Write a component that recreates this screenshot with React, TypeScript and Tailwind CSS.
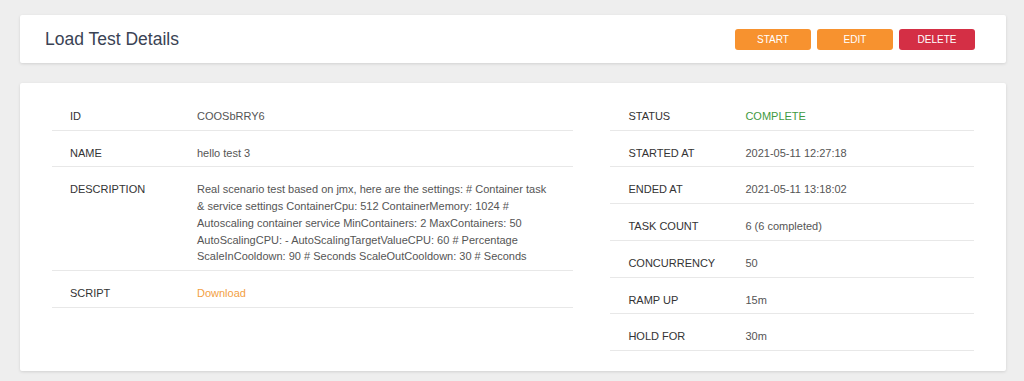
import React from 'react';

type Row = { label: string; value: React.ReactNode };

const leftRows: Row[] = [
  { label: 'ID', value: 'COOSbRRY6' },
  { label: 'NAME', value: 'hello test 3' },
  {
    label: 'DESCRIPTION',
    value:
      'Real scenario test based on jmx, here are the settings: # Container task & service settings ContainerCpu: 512 ContainerMemory: 1024 # Autoscaling container service MinContainers: 2 MaxContainers: 50 AutoScalingCPU: - AutoScalingTargetValueCPU: 60 # Percentage ScaleInCooldown: 90 # Seconds ScaleOutCooldown: 30 # Seconds',
  },
  {
    label: 'SCRIPT',
    value: (
      <a href="#" className="text-[#f3a043]">
        Download
      </a>
    ),
  },
];

const rightRows: Row[] = [
  { label: 'STATUS', value: <span className="text-[#3f9a3f]">COMPLETE</span> },
  { label: 'STARTED AT', value: '2021-05-11 12:27:18' },
  { label: 'ENDED AT', value: '2021-05-11 13:18:02' },
  { label: 'TASK COUNT', value: '6 (6 completed)' },
  { label: 'CONCURRENCY', value: '50' },
  { label: 'RAMP UP', value: '15m' },
  { label: 'HOLD FOR', value: '30m' },
];

function DetailTable({ rows, labelWidth }: { rows: Row[]; labelWidth: string }) {
  return (
    <div className="flex flex-col">
      {rows.map((row) => (
        <div
          key={row.label}
          className="flex border-b border-[#e8e8e8] pt-[14px] pb-[5px] text-[11px] leading-[16.7px]"
        >
          <div className={`${labelWidth} shrink-0 pl-[18px] text-[#333333]`}>{row.label}</div>
          <div className="flex-1 pr-[18px] text-[#555555]">{row.value}</div>
        </div>
      ))}
    </div>
  );
}

export default function App() {
  return (
    <div className="min-h-screen bg-[#eeeeee] pl-5 pr-[18px] pt-[15px] font-['Liberation_Sans',Arial,sans-serif]">
      {/* header card */}
      <div className="flex h-12 items-center justify-between rounded-[2px] bg-white pl-[25px] pr-[31px] shadow-[0_1px_3px_rgba(0,0,0,0.12)]">
        <h1 className="text-[17.5px] text-[#3a4354]">Load Test Details</h1>
        <div className="flex gap-[6px]">
          <button className="h-[21px] w-[76px] rounded-[3px] bg-[#f7922f] text-[10px] text-white">
            START
          </button>
          <button className="h-[21px] w-[76px] rounded-[3px] bg-[#f7922f] text-[10px] text-white">
            EDIT
          </button>
          <button className="h-[21px] w-[76px] rounded-[3px] bg-[#d42f45] text-[10px] text-white">
            DELETE
          </button>
        </div>
      </div>

      {/* details card */}
      <div className="mt-5 flex h-[288px] gap-[37px] rounded-[2px] bg-white px-8 pt-[11px] shadow-[0_1px_3px_rgba(0,0,0,0.12)]">
        <div className="w-[522px]">
          <DetailTable rows={leftRows} labelWidth="w-[145px]" />
        </div>
        <div className="w-[364px]">
          <DetailTable rows={rightRows} labelWidth="w-[135px]" />
        </div>
      </div>
    </div>
  );
}
